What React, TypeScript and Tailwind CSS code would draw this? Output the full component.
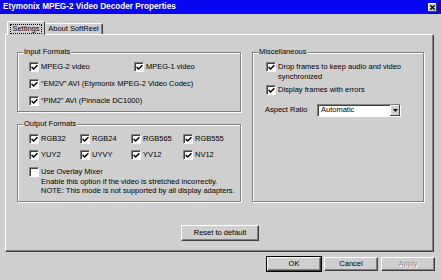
import type { ReactNode } from "react";

const bg = "bg-[#cfcfcf]";

function Check({ on = true }: { on?: boolean }) {
  return (
    <span className="flex h-[10px] w-[10px] shrink-0 items-center justify-center border border-t-[#808080] border-l-[#808080] border-b-white border-r-white bg-white shadow-[inset_1px_1px_0_#404040]">
      {on && (
        <svg width="7" height="7" viewBox="0 0 7 7" className="ml-px mt-px">
          <path d="M0.6 3 L2.6 5 L6.4 1.2" fill="none" stroke="#000" strokeWidth="1.5" />
        </svg>
      )}
    </span>
  );
}

function Option({ label, on = true, className = "" }: { label: string; on?: boolean; className?: string }) {
  return (
    <div className={`flex items-center gap-[2px] whitespace-nowrap ${className}`}>
      <Check on={on} />
      <span>{label}</span>
    </div>
  );
}

function Group({ label, className = "", children }: { label: string; className?: string; children: ReactNode }) {
  return (
    <div className={`relative shrink-0 border border-[#808080] shadow-[inset_1px_1px_0_#fff,1px_1px_0_#fff] ${className}`}>
      <span className={`absolute -top-[6px] left-[5px] ${bg} px-[1px] leading-[10px]`}>{label}</span>
      {children}
    </div>
  );
}

function Button({ label, disabled = false, className = "" }: { label: string; disabled?: boolean; className?: string }) {
  return (
    <button
      type="button"
      className={`flex items-center justify-center border border-t-white border-l-white border-b-[#404040] border-r-[#404040] ${bg} shadow-[inset_-1px_-1px_0_#808080] ${
        disabled ? "text-[#8a8a8a] [text-shadow:1px_1px_0_#fff]" : "text-black"
      } ${className}`}
    >
      {label}
    </button>
  );
}

export default function App() {
  return (
    <div className={`flex h-[280px] w-[441px] flex-col overflow-hidden ${bg} font-['Liberation_Sans',Arial,sans-serif] text-[7.5px] leading-[9.5px] text-black`}>
      {/* title bar */}
      <div className="flex h-[14px] shrink-0 items-center justify-between bg-[#0606f2] pl-[3px] pr-[4px]">
        <span className="text-[8.2px] font-bold leading-[10px] text-white">
          Etymonix MPEG-2 Video Decoder Properties
        </span>
        <span className={`flex h-[9px] w-[9px] items-center justify-center ${bg} shadow-[inset_-1px_-1px_0_#404040,inset_1px_1px_0_#fff]`}>
          <svg width="5" height="5" viewBox="0 0 5 5">
            <path d="M0.3 0.3 L4.7 4.7 M4.7 0.3 L0.3 4.7" stroke="#000" strokeWidth="1.3" />
          </svg>
        </span>
      </div>

      {/* tabs */}
      <div className="relative z-10 mt-[7px] flex h-[13px] shrink-0 items-end pl-[7px]">
        <div className={`-mb-px flex h-[14px] w-[38px] items-center justify-center rounded-t-[2px] border-l border-t border-r border-l-white border-t-white border-r-[#404040] ${bg}`}>
          <span className="border border-dotted border-black px-[1px] leading-[8px]">Settings</span>
        </div>
        <div className="flex h-[11px] w-[58px] items-center justify-center rounded-t-[2px] border-t border-r border-t-white border-r-[#404040] shadow-[inset_-1px_0_0_#808080]">
          About SoftReel
        </div>
      </div>

      {/* tab panel */}
      <div className="ml-[5px] flex h-[218px] w-[429px] shrink-0 flex-col border border-t-white border-l-white border-r-[#404040] border-b-[#404040] pl-[11px] pt-[17px] shadow-[inset_-1px_-1px_0_#808080]">
        <div className="flex items-start gap-[11px]">
          <div className="flex flex-col">
            <Group label="Input Formats" className="h-[60px] w-[224px]">
              <div className="flex flex-col pl-[11px] pt-[5px]">
                <div className="flex h-[17px] items-center">
                  <Option label="MPEG-2 video" className="w-[105px]" />
                  <Option label="MPEG-1 video" />
                </div>
                <div className="flex h-[17px] items-center">
                  <Option label={"\u201CEM2V\u201D AVI (Etymonix MPEG-2 Video Codec)"} />
                </div>
                <div className="flex h-[17px] items-center">
                  <Option label={"\u201CPIM2\u201D AVI (Pinnacle DC1000)"} />
                </div>
              </div>
            </Group>

            <Group label="Output Formats" className="mt-[12px] h-[78px] w-[224px]">
              <div className="flex flex-col pl-[11px] pt-[6px]">
                <div className="grid grid-cols-[51px_51px_52px_51px]">
                  {["RGB32", "RGB24", "RGB565", "RGB555", "YUY2", "UYVY", "YV12", "NV12"].map((f) => (
                    <div key={f} className="flex h-[16px] items-center">
                      <Option label={f} />
                    </div>
                  ))}
                </div>
                <div className="mt-[4px] flex items-start gap-[2px] whitespace-nowrap">
                  <Check on={false} />
                  <div className="flex flex-col">
                    <span>Use Overlay Mixer</span>
                    <span>Enable this option if the video is stretched incorrectly.</span>
                    <span>NOTE: This mode is not supported by all display adapters.</span>
                  </div>
                </div>
              </div>
            </Group>
          </div>

          <Group label="Miscellaneous" className="h-[150px] w-[172px]">
            <div className="flex flex-col pl-[13px] pt-[9px]">
              <div className="flex items-start gap-[2px] whitespace-nowrap">
                <Check />
                <div className="flex flex-col">
                  <span>Drop frames to keep audio and video</span>
                  <span>synchronized</span>
                </div>
              </div>
              <Option label="Display frames with errors" className="mt-[4px] h-[9.5px]" />
              <div className="-ml-px mt-[9px] flex items-center">
                <span className="w-[52px]">Aspect Ratio</span>
                <div className="flex h-[13px] w-[84px] items-center justify-between border border-t-[#808080] border-l-[#808080] border-b-white border-r-white bg-white shadow-[inset_1px_1px_0_#404040]">
                  <span className="pl-[3px]">Automatic</span>
                  <span className={`flex h-[11px] w-[10px] items-center justify-center ${bg} shadow-[inset_-1px_-1px_0_#404040,inset_1px_1px_0_#fff]`}>
                    <svg width="5" height="3" viewBox="0 0 5 3">
                      <path d="M0 0 H5 L2.5 3 Z" fill="#000" />
                    </svg>
                  </span>
                </div>
              </div>
            </div>
          </Group>
        </div>

        <Button label="Reset to default" className="ml-[164px] mt-[23px] h-[16px] w-[78px]" />
      </div>

      {/* dialog buttons */}
      <div className="mt-[5px] flex justify-end gap-[3px] pr-[6px]">
        <Button label="OK" className="h-[14px] w-[54px] outline outline-1 outline-black" />
        <Button label="Cancel" className="h-[14px] w-[54px]" />
        <Button label="Apply" disabled className="h-[14px] w-[54px]" />
      </div>
    </div>
  );
}
